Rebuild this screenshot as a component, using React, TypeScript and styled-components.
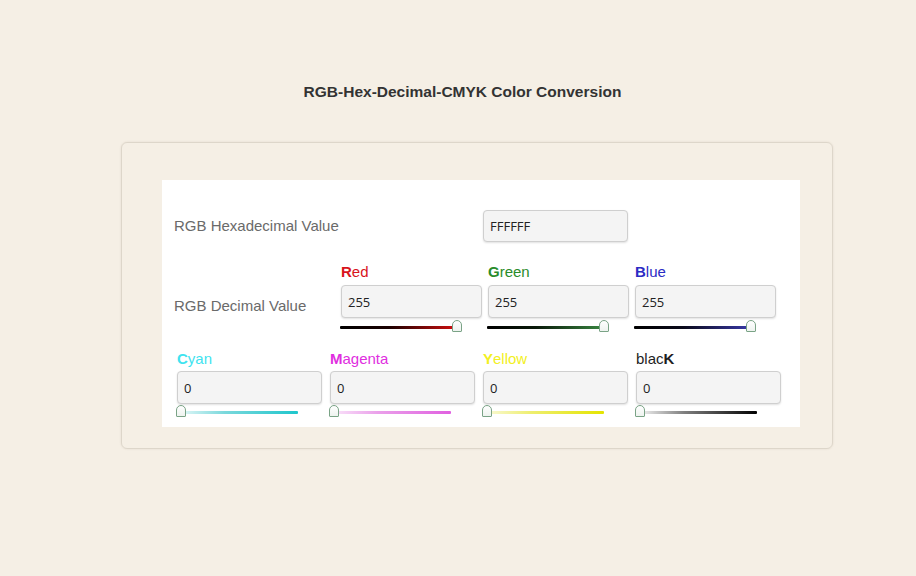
import React from "react";
import styled, { createGlobalStyle } from "styled-components";

const Global = createGlobalStyle`
  html, body { margin: 0; padding: 0; }
  body {
    background: #f5efe5;
    font-family: "Liberation Sans", Arial, sans-serif;
    min-height: 576px;
  }
`;

const Page = styled.div`
  width: 916px;
  height: 576px;
  padding-top: 83px;
  box-sizing: border-box;
`;

const Title = styled.h1`
  margin: 0;
  padding-left: 9px;
  text-align: center;
  font-size: 15.5px;
  line-height: 18px;
  font-weight: bold;
  color: #333;
`;

const Card = styled.div`
  margin: 41px 0 0 121px;
  width: 712px;
  height: 307px;
  box-sizing: border-box;
  border: 1px solid #ddd6ca;
  border-radius: 6px;
  box-shadow: 0 0 2px rgba(120, 100, 70, 0.15);
  padding: 37px 32px 21px 40px;
`;

const Panel = styled.div`
  background: #fff;
  height: 247px;
  padding-top: 30px;
  box-sizing: border-box;
`;

const HexRow = styled.div`
  display: grid;
  grid-template-columns: 309px 145px;
  padding-left: 12px;
  height: 32px;
  align-items: center;
`;

const RowLabel = styled.div<{ $top?: number }>`
  font-size: 15px;
  line-height: 18px;
  color: #6a6a6a;
  padding-top: ${(p) => p.$top ?? 0}px;
`;

const Field = styled.input<{ $h: number }>`
  box-sizing: border-box;
  width: 100%;
  height: ${(p) => p.$h}px;
  margin: 0;
  padding: 0 6px;
  border: 1px solid #cfcfcf;
  border-radius: 4px;
  background: #f4f4f4;
  box-shadow: 0 1px 2px rgba(0, 0, 0, 0.12);
  font-family: "Open Sans", "Liberation Sans", sans-serif;
  font-size: 13px;
  color: #222;
  outline: none;
`;

const DecRow = styled.div`
  display: grid;
  grid-template-columns: 161px repeat(3, 141px);
  column-gap: 6px;
  padding-left: 12px;
  margin-top: 21px;
`;

const CmykRow = styled.div`
  display: grid;
  grid-template-columns: repeat(4, 145px);
  column-gap: 8px;
  padding-left: 15px;
  margin-top: 17px;
`;

const Cell = styled.div<{ $gap: number }>`
  display: flex;
  flex-direction: column;
  & > label {
    margin-bottom: ${(p) => p.$gap}px;
  }
`;

const ChanLabel = styled.label<{ $color: string }>`
  font-size: 15px;
  line-height: 18px;
  color: ${(p) => p.$color};
  b {
    font-weight: bold;
  }
`;

const Slider = styled.input<{ $track: string; $shift: number; $top: number }>`
  -webkit-appearance: none;
  appearance: none;
  display: block;
  width: 122px;
  height: 12px;
  margin: ${(p) => p.$top}px 0 0 ${(p) => p.$shift}px;
  padding: 0;
  background: transparent;
  outline: none;
  &::-webkit-slider-runnable-track {
    height: 3px;
    border-radius: 1px;
    background: ${(p) => p.$track};
  }
  &::-webkit-slider-thumb {
    -webkit-appearance: none;
    box-sizing: border-box;
    width: 10px;
    height: 12px;
    margin-top: -6px;
    border: 1px solid #7aa386;
    border-radius: 5px 5px 1px 1px;
    background: linear-gradient(#ffffff, #eef3ef);
  }
`;

type Chan = {
  first: string;
  rest: string;
  color: string;
  track: string;
  value: number;
  max: number;
};

const rgb: Chan[] = [
  { first: "R", rest: "ed", color: "#d8141c", track: "linear-gradient(to right, #000 0%, #1a0000 40%, #e01010 100%)", value: 255, max: 255 },
  { first: "G", rest: "reen", color: "#2a8c2a", track: "linear-gradient(to right, #000 0%, #0a1a0a 40%, #3d8f45 100%)", value: 255, max: 255 },
  { first: "B", rest: "lue", color: "#2b2bc4", track: "linear-gradient(to right, #000 0%, #0a0a1a 40%, #3c3cb4 100%)", value: 255, max: 255 },
];

const cmyk: Chan[] = [
  { first: "C", rest: "yan", color: "#3fe3ef", track: "linear-gradient(to right, #ecfafa 0%, #7ad8dc 40%, #1ec6cc 100%)", value: 0, max: 100 },
  { first: "M", rest: "agenta", color: "#e02ee0", track: "linear-gradient(to right, #fbeafb 0%, #eaa0ea 40%, #e060e0 100%)", value: 0, max: 100 },
  { first: "Y", rest: "ellow", color: "#f2f022", track: "linear-gradient(to right, #fafae0 0%, #eeee70 40%, #e4e400 100%)", value: 0, max: 100 },
  { first: "", rest: "blac", color: "#1e1e1e", track: "linear-gradient(to right, #ffffff 0%, #808080 40%, #000 100%)", value: 0, max: 100 },
];

const ChannelCell: React.FC<{ c: Chan; gap: number; shift: number; top: number }> = ({ c, gap, shift, top }) => (
  <Cell $gap={gap}>
    <ChanLabel $color={c.color}>
      {c.first ? (
        <>
          <b>{c.first}</b>
          {c.rest}
        </>
      ) : (
        <>
          {c.rest}
          <b>K</b>
        </>
      )}
    </ChanLabel>
    <Field $h={33} type="text" defaultValue={String(c.value)} />
    <Slider
      type="range"
      min={0}
      max={c.max}
      defaultValue={c.value}
      $track={c.track}
      $shift={shift}
      $top={top}
    />
  </Cell>
);

export default function App() {
  return (
    <>
      <Global />
      <Page>
        <Title>RGB-Hex-Decimal-CMYK Color Conversion</Title>
        <Card>
          <Panel>
            <HexRow>
              <RowLabel>RGB Hexadecimal Value</RowLabel>
              <Field $h={32} type="text" defaultValue="FFFFFF" />
            </HexRow>
            <DecRow>
              <RowLabel $top={34}>RGB Decimal Value</RowLabel>
              {rgb.map((c) => (
                <ChannelCell key={c.first} c={c} gap={4} shift={-1} top={3} />
              ))}
            </DecRow>
            <CmykRow>
              {cmyk.map((c) => (
                <ChannelCell key={c.rest} c={c} gap={3} shift={-1} top={2} />
              ))}
            </CmykRow>
          </Panel>
        </Card>
      </Page>
    </>
  );
}
